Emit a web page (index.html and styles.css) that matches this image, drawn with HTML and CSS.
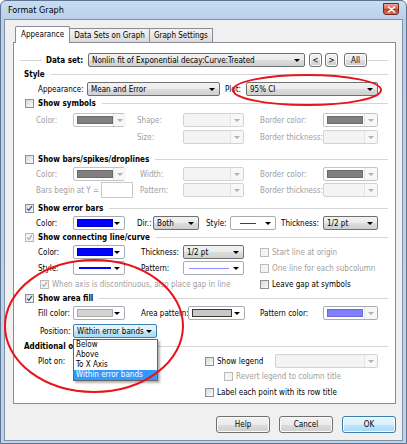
FILE: index.html
```html
<!DOCTYPE html>
<html lang="en">
<head>
  <meta charset="UTF-8" />
  <title>Format Graph</title>
  <link rel="stylesheet" href="styles.css">
</head>
<body>
<div class="window">
  <div class="titlebar">
    <span class="title">Format Graph</span>
    <div class="close">
      <svg width="9" height="7" viewBox="0 0 9 7"><path d="M1.5 1 L7.5 6 M7.5 1 L1.5 6" stroke="#fff" stroke-width="1.6" stroke-linecap="round"/></svg>
    </div>
  </div>

  <div class="client">
    <div class="tabs">
      <div class="tab active">Appearance</div>
      <div class="tab">Data Sets on Graph</div>
      <div class="tab">Graph Settings</div>
    </div>

    <div class="panel">
      <div class="dataset">
        <span class="rule lead"></span>
        <b class="ds-label">Data set:</b>
        <div class="sel w217"><span>Nonlin fit of Exponential decay:Curve:Treated</span><i class="arr"></i></div>
        <button class="btn nav">&lt;</button>
        <button class="btn nav">&gt;</button>
        <button class="btn all">All</button>
        <span class="rule"></span>
      </div>

      <div class="hdr plain"><b>Style</b><span class="rule"></span></div>
      <div class="row appearance">
        <span class="lab-app">Appearance:</span>
        <div class="sel w133"><span>Mean and Error</span><i class="arr"></i></div>
        <span class="lab-plot">Plot:</span>
        <div class="sel w132"><span>95% CI</span><i class="arr"></i></div>
      </div>

      <!-- symbols -->
      <div class="hdr"><span class="cb"></span><b>Show symbols</b><span class="rule"></span></div>
      <div class="grid sym dim">
        <span>Color:</span>
        <div class="swatch dis w52"><i class="sw grey"></i><i class="drop"></i></div>
        <span>Shape:</span>
        <div class="sel dis w61"><i class="drop"></i></div>
        <span>Border color:</span>
        <div class="swatch dis w55"><i class="sw grey"></i><i class="drop"></i></div>
      </div>
      <div class="grid sym dim">
        <span></span>
        <span></span>
        <span>Size:</span>
        <div class="sel dis w61"><i class="drop"></i></div>
        <span>Border thickness:</span>
        <div class="sel dis w55"><i class="drop"></i></div>
      </div>

      <!-- bars -->
      <div class="hdr gap8"><span class="cb"></span><b>Show bars/spikes/droplines</b><span class="rule"></span></div>
      <div class="grid dim">
        <span>Color:</span>
        <div class="swatch dis w52"><i class="sw grey"></i><i class="drop"></i></div>
        <span class="pad3">Width:</span>
        <div class="sel dis w61"><i class="drop"></i></div>
        <span>Border color:</span>
        <div class="swatch dis w55"><i class="sw grey"></i><i class="drop"></i></div>
      </div>
      <div class="grid dim">
        <span class="span2 bars-begin">Bars begin at Y = <i class="input"></i></span>
        <span class="pad3">Pattern:</span>
        <div class="sel dis w61"><i class="drop"></i></div>
        <span>Border thickness:</span>
        <div class="sel dis w55"><i class="drop"></i></div>
      </div>

      <!-- error bars -->
      <div class="hdr gap4">
        <span class="cb"><svg class="tick" viewBox="0 0 8 8"><path d="M1.3 4.2 L3.2 6.2 L6.8 1.4"/></svg></span>
        <b>Show error bars</b><span class="rule"></span>
      </div>
      <div class="grid err">
        <span>Color:</span>
        <div class="swatch w52"><i class="sw blue"></i><i class="arr"></i></div>
        <span>Dir.:</span>
        <div class="sel w46"><span>Both</span><i class="arr"></i></div>
        <span>Style:</span>
        <div class="swatch w46"><i class="line dark"></i><i class="arr"></i></div>
        <span>Thickness:</span>
        <div class="sel w55"><span>1/2 pt</span><i class="arr"></i></div>
      </div>

      <!-- connecting line -->
      <div class="hdr">
        <span class="cb dis"><svg class="tick" viewBox="0 0 8 8"><path d="M1.3 4.2 L3.2 6.2 L6.8 1.4"/></svg></span>
        <b>Show connecting line/curve</b><span class="rule"></span>
      </div>
      <div class="grid">
        <span class="pad2">Color:</span>
        <div class="swatch w52"><i class="sw blue"></i><i class="arr"></i></div>
        <span class="pad4">Thickness:</span>
        <div class="sel w61"><span>1/2 pt</span><i class="arr"></i></div>
        <label class="check dim span2"><span class="cb dis"></span>Start line at origin</label>
      </div>
      <div class="grid loose">
        <span class="pad2">Style:</span>
        <div class="swatch w52"><i class="line blue"></i><i class="arr"></i></div>
        <span class="pad4">Pattern:</span>
        <div class="swatch w61"><i class="line lilac"></i><i class="arr"></i></div>
        <label class="check dim span2"><span class="cb dis"></span>One line for each subcolumn</label>
      </div>
      <div class="grid loose">
        <label class="check dim span4 pad4">
          <span class="cb dis"><svg class="tick" viewBox="0 0 8 8"><path d="M1.3 4.2 L3.2 6.2 L6.8 1.4"/></svg></span>When axis is discontinuous, also place gap in line
        </label>
        <label class="check span2"><span class="cb"></span>Leave gap at symbols</label>
      </div>

      <!-- area fill -->
      <div class="hdr">
        <span class="cb"><svg class="tick" viewBox="0 0 8 8"><path d="M1.3 4.2 L3.2 6.2 L6.8 1.4"/></svg></span>
        <b>Show area fill</b><span class="rule"></span>
      </div>
      <div class="grid">
        <span class="pad2">Fill color:</span>
        <div class="swatch w52"><i class="sw light"></i><i class="arr"></i></div>
        <span class="pad4">Area pattern:</span>
        <div class="swatch w57 nudge"><i class="sw pattern"></i><i class="arr"></i></div>
        <span>Pattern color:</span>
        <div class="swatch w55"><i class="sw lilac"></i><i class="drop"></i></div>
      </div>
      <div class="grid position">
        <span class="pad4">Position:</span>
        <div class="sel focus w84 span2"><span>Within error bands</span><i class="arr"></i></div>
      </div>

      <div class="hdr plain additional"><b>Additional options</b><span class="rule"></span></div>
      <div class="bottom">
        <div class="plot-on">
          <span class="pad2">Plot on:</span>
          <div class="sel w82"><i class="arr"></i></div>
        </div>
        <div class="legend">
          <div class="legend-row">
            <label class="check show-legend"><span class="cb"></span>Show legend</label>
            <div class="sel dis w103"><i class="drop"></i></div>
          </div>
          <label class="check dim revert"><span class="cb dis"></span>Revert legend to column title</label>
          <label class="check label-pt"><span class="cb"></span>Label each point with its row title</label>
        </div>
      </div>

      <ul class="droplist">
        <li>Below</li>
        <li>Above</li>
        <li>To X Axis</li>
        <li class="picked">Within error bands</li>
      </ul>
    </div>

    <div class="actions">
      <button class="btn">Help</button>
      <button class="btn">Cancel</button>
      <button class="btn default">OK</button>
    </div>
  </div>

  <svg class="marks" width="407" height="444" viewBox="0 0 407 444">
    <ellipse cx="307" cy="90" rx="74" ry="15"/>
    <ellipse cx="94" cy="326" rx="89" ry="66"/>
  </svg>
</div>
</body>
</html>
```

FILE: styles.css
```css
* {
  box-sizing: border-box;
}
body {
  margin: 0;
  font-family: "DejaVu Sans Condensed", "DejaVu Sans", sans-serif;
  font-size: 8px;
  color: #000;
  background: #fff;
}

/* window frame */
.window {
  position: relative;
  width: 407px;
  height: 444px;
  border: 1px solid #5d7590;
  border-radius: 6px 6px 0 0;
  background: linear-gradient(#c9dcf1, #b9d0ea 18px, #bfd4ec);
  overflow: hidden;
}
.titlebar {
  display: flex;
  align-items: center;
  height: 18px;
  padding: 0 7px;
}
.title {
  font-size: 9px;
}
.close {
  margin-left: auto;
  margin-top: -2px;
  width: 16px;
  height: 12px;
  border: 1px solid #6b2b21;
  border-radius: 0 0 3px 3px;
  background: linear-gradient(#eaa595, #d5644b 50%, #c23c22 51%, #d8745a);
  display: flex;
  align-items: center;
  justify-content: center;
}
.client {
  height: 422px;
  margin: 0 3px;
  border: 1px solid #7d91a7;
  background: #f0f0f0;
  padding: 6px 6px 0 8px;
}

/* tabs */
.tabs {
  display: flex;
  height: 16px;
  padding-left: 2px;
  position: relative;
  z-index: 1;
}
.tab {
  height: 14px;
  margin-top: 2px;
  padding: 0 4px;
  border: 1px solid #898c95;
  border-bottom: 0;
  border-left: 0;
  background: linear-gradient(#f3f3f3, #e8e8e8 50%, #dadada);
  line-height: 13px;
  white-space: nowrap;
}
.tab.active {
  height: 17px;
  margin-top: 0;
  padding: 0 5px;
  border-left: 1px solid #898c95;
  border-radius: 2px 2px 0 0;
  background: #fff;
  line-height: 15px;
}
.panel {
  position: relative;
  height: 362px;
  border: 1px solid #898c95;
  background: #fff;
  padding: 10px 7px 0 0;
}

/* group headers */
.rule {
  flex: 1;
  height: 1px;
  background: #d5d5d5;
}
.hdr {
  display: flex;
  align-items: center;
  height: 14px;
  padding-left: 11px;
}
.hdr.plain {
  padding-left: 10px;
}
.hdr .rule {
  margin-left: 6px;
}
.hdr .cb {
  margin-right: 4px;
}
.gap8 {
  margin-top: 8px;
}
.gap4 {
  margin-top: 5px;
}
.additional {
  margin-top: 1px;
}

.dataset {
  display: flex;
  align-items: center;
  height: 14px;
}
.rule.lead {
  flex: none;
  width: 22px;
  margin-left: 6px;
}
.ds-label {
  width: 42px;
  margin-left: 4px;
}
.btn {
  font: inherit;
  color: #000;
  height: 14px;
  padding: 0;
  border: 1px solid #707070;
  border-radius: 3px;
  background: linear-gradient(#f2f2f2, #ebebeb 50%, #dddddd 51%, #cfcfcf);
  box-shadow: inset 0 0 0 1px #fbfbfb;
}
.btn.nav {
  width: 13px;
  margin-left: 3px;
}
.dataset .sel + .btn {
  margin-left: 4px;
}
.btn.all {
  width: 23px;
  margin-left: 6px;
}

/* control rows */
.row {
  display: flex;
  align-items: center;
  height: 14px;
  margin-top: 1px;
}
.appearance {
  padding-left: 24px;
}
.lab-app {
  width: 49px;
}
.lab-plot {
  width: 21px;
  margin-left: 5px;
}
.grid {
  display: grid;
  grid-template-columns: 37px 64px 46px 77px 63px 55px;
  align-items: center;
  height: 14px;
  margin-top: 1px;
  padding-left: 22px;
  white-space: nowrap;
}
.grid.sym {
  margin-top: 3px;
}
.grid.loose {
  margin-top: 2px;
}
.grid.err {
  grid-template-columns: 37px 64px 16px 53px 24px 51px 42px 55px;
}
.grid.position {
  margin-top: 4px;
}
.span2 {
  grid-column: span 2;
}
.span4 {
  grid-column: span 4;
}
.pad2 {
  padding-left: 2px;
}
.pad3 {
  padding-left: 3px;
}
.pad4 {
  padding-left: 4px;
}
.dim {
  color: #a0a0a0;
}
.bars-begin {
  display: flex;
  align-items: center;
}
.input {
  width: 32px;
  height: 16px;
  margin-left: 2px;
  border: 1px solid #c9c9c9;
  background: #fff;
}

/* combo boxes */
.sel {
  display: flex;
  align-items: center;
  height: 14px;
  padding-left: 3px;
  border: 1px solid #707070;
  border-radius: 2px;
  background: linear-gradient(#f2f2f2, #ebebeb 50%, #dddddd 51%, #cfcfcf);
  white-space: nowrap;
  overflow: hidden;
}
.sel.dis {
  padding-left: 0;
  border-color: #d2d2d2;
  background: #f4f4f4;
}
.sel.focus {
  border-color: #3c7fb1;
  background: linear-gradient(#eaf6fd, #d9f0fc 50%, #bee6fd 51%, #a7d9f5);
}
.swatch {
  display: flex;
  align-items: center;
  height: 14px;
  padding-left: 3px;
  border: 1px solid #a5acb5;
  border-radius: 2px;
  background: #fff;
}
.swatch.dis {
  border-color: #c4c4c4;
}
.nudge {
  margin-left: 5px;
}
.arr {
  flex: none;
  margin-left: auto;
  margin-right: 4px;
  border-left: 3px solid transparent;
  border-right: 3px solid transparent;
  border-top: 3px solid #000;
}
.drop {
  flex: none;
  display: flex;
  align-items: center;
  justify-content: center;
  width: 13px;
  height: 100%;
  margin-left: auto;
  border-left: 1px solid #e4e4e4;
  background: #f7f7f7;
}
.drop::after {
  content: "";
  border-left: 3px solid transparent;
  border-right: 3px solid transparent;
  border-top: 3px solid #b0b0b0;
}
.sw {
  flex: none;
  width: 36px;
  height: 8px;
  border: 1px solid #555;
}
.sw.grey { background: #808080; border-color: #6a6a6a; }
.sw.blue { background: #0000ff; border-color: #0000c0; }
.sw.light { background: #d4d4d4; border-color: #a8a8a8; }
.sw.pattern { width: 40px; background: #c8c8c8; border-color: #3a3a3a; }
.sw.lilac { background: #8080ff; border-color: #6a6ad8; }
.line {
  flex: none;
  width: 32px;
  height: 2px;
  margin-left: 2px;
}
.line.dark { width: 16px; height: 1px; margin-left: 6px; background: #404040; }
.line.blue { background: #0000ff; }
.line.lilac { width: 40px; height: 1px; background: #8f8fff; }

.w46 { width: 46px; }
.w52 { width: 52px; }
.w55 { width: 55px; }
.w57 { width: 57px; }
.w61 { width: 61px; }
.w82 { width: 82px; }
.w84 { width: 84px; }
.w103 { width: 103px; }
.w132 { width: 132px; }
.w133 { width: 133px; }
.w217 { width: 217px; }

/* check boxes */
.cb {
  flex: none;
  display: inline-flex;
  align-items: center;
  justify-content: center;
  width: 9px;
  height: 9px;
  border: 1px solid #8e8f8f;
  background: linear-gradient(135deg, #d8d8d8, #fbfbfb);
}
.cb.dis {
  border-color: #bababa;
  background: #f4f4f4;
}
.tick {
  width: 7px;
  height: 7px;
  fill: none;
  stroke: #2b4c92;
  stroke-width: 1.4;
}
.cb.dis .tick {
  stroke: #a8a8a8;
}
.check {
  display: flex;
  align-items: center;
  white-space: nowrap;
}
.check .cb {
  margin-right: 3px;
}

/* additional options */
.bottom {
  display: grid;
  grid-template-columns: 169px 1fr;
  margin-top: 1px;
  padding-left: 22px;
}
.plot-on {
  display: flex;
  align-items: center;
  height: 14px;
}
.plot-on span {
  width: 37px;
}
.legend-row {
  display: flex;
  align-items: center;
  height: 14px;
}
.show-legend {
  width: 70px;
}
.revert {
  height: 14px;
  margin-top: 1px;
  padding-left: 19px;
}
.label-pt {
  height: 14px;
  margin-top: 2px;
}

/* open list of the Position box */
.droplist {
  position: absolute;
  left: 59px;
  top: 296px;
  z-index: 2;
  width: 85px;
  margin: 0;
  padding: 0;
  list-style: none;
  background: #fff;
  border: 1px solid #646464;
  box-shadow: 2px 2px 2px rgba(0, 0, 0, 0.3);
}
.droplist li {
  height: 10px;
  line-height: 10px;
  padding-left: 2px;
  white-space: nowrap;
}
.droplist li.picked {
  background: #3399ff;
  color: #fff;
}

/* dialog buttons */
.actions {
  display: flex;
  justify-content: flex-end;
  gap: 9px;
  margin-top: 12px;
}
.actions .btn {
  width: 54px;
  height: 17px;
}
.btn.default {
  border-color: #3c7fb1;
  background: linear-gradient(#eaf6fd, #d9f0fc 50%, #bee6fd 51%, #a7d9f5);
}

/* red annotation rings */
.marks {
  position: absolute;
  left: -1px;
  top: -1px;
  z-index: 5;
  pointer-events: none;
  fill: none;
  stroke: #e8141b;
  stroke-width: 2;
}
```
